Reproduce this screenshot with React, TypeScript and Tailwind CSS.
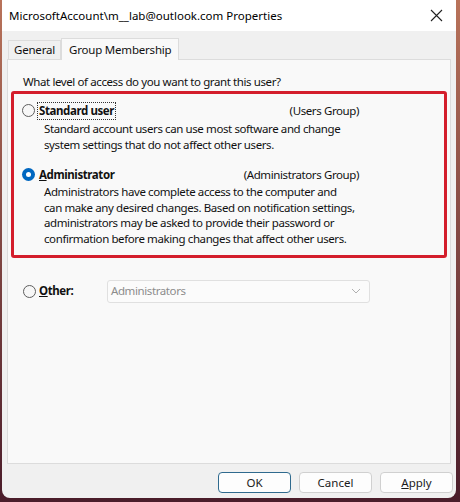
import React from "react";

const font = { fontFamily: '"Noto Sans", "Open Sans", sans-serif' };

const Radio = ({ checked }: { checked?: boolean }) =>
    checked ? (
        <span className="w-[13px] h-[13px] rounded-full bg-[#0067c0] flex items-center justify-center shrink-0">
            <span className="w-[5px] h-[5px] rounded-full bg-white" />
        </span>
    ) : (
        <span className="w-[13px] h-[13px] rounded-full border border-[#5e5e5e] bg-[#f7f7f7] shrink-0" />
    );

const Button = ({ children, primary }: { children: React.ReactNode; primary?: boolean }) => (
    <button
        className={
            primary
                ? "w-[73px] h-[21px] rounded-[4px] border border-[#2f6a8e] bg-[#fdfdfd] text-[11.5px] text-[#1a1a1a]"
                : "w-[73px] h-[21px] rounded-[4px] border border-[#d0d0d0] bg-[#fdfdfd] text-[11.5px] text-[#1a1a1a]"
        }
    >
        {children}
    </button>
);

export default function App() {
    return (
        <div className="w-[460px] h-[502px] bg-linear-to-b from-[#b9735a] to-[#4a1c2a] overflow-hidden" style={font}>
            <div className="ml-[2px] w-[454px] h-[498px] bg-[#f0f0f0] rounded-b-[8px] flex flex-col text-[#111] overflow-hidden">
                {/* title bar */}
                <div className="h-[31px] bg-white flex items-center justify-between pl-[7px] pr-[10px] shrink-0">
                    <span className="text-[11.5px] text-black">MicrosoftAccount\m__lab@outlook.com Properties</span>
                    <svg width="13" height="13" viewBox="0 0 13 13" className="mr-[3px]">
                        <path d="M1 1 L12 12 M12 1 L1 12" stroke="#222" strokeWidth="1.1" />
                    </svg>
                </div>

                {/* tabs */}
                <div className="flex items-end pl-[6px] pt-[6px] h-[28px] shrink-0 text-[11.5px] tracking-[-0.2px]">
                    <div className="h-[19px] px-[5px] border border-b-0 border-[#dcdcdc] bg-[#f0f0f0] flex items-center">General</div>
                    <div className="h-[22px] px-[7px] border border-b-0 border-[#dcdcdc] bg-[#f9f9f9] flex items-center -mb-px relative z-10">Group Membership</div>
                </div>

                {/* panel */}
                <div className="mx-[5px] h-[405px] bg-[#f9f9f9] border border-[#dcdcdc] flex flex-col px-[3px] text-[11.5px] tracking-[-0.4px] shrink-0">
                    <div className="pl-[12px] pt-[14px] h-[31px] leading-[15px]">What level of access do you want to grant this user?</div>

                    <div className="border-[3px] border-[#d41e2c] rounded-[3px] h-[167px] w-[436px] pl-[8px] pt-[7px]">
                        <div className="flex items-center h-[19px] w-[337px]">
                            <Radio />
                            <span className="ml-[2px] font-bold border border-dotted border-[#333] px-px leading-[16px]">Standard user</span>
                            <span className="ml-auto">(Users Group)</span>
                        </div>
                        <div className="pl-[22px] pt-[1px] leading-[15.5px]">
                            Standard account users can use most software and change<br />
                            system settings that do not affect other users.
                        </div>
                        <div className="flex items-center h-[19px] w-[337px] mt-[13px]">
                            <Radio checked />
                            <span className="ml-[4px] font-bold"><span className="underline">A</span>dministrator</span>
                            <span className="ml-auto">(Administrators Group)</span>
                        </div>
                        <div className="pl-[22px] leading-[15.5px]">
                            Administrators have complete access to the computer and<br />
                            can make any desired changes. Based on notification settings,<br />
                            administrators may be asked to provide their password or<br />
                            confirmation before making changes that affect other users.
                        </div>
                    </div>

                    <div className="flex items-center pl-[12px] mt-[21px] h-[24px]">
                        <Radio />
                        <span className="ml-[3px] font-bold w-[68px]"><span className="underline">O</span>ther:</span>
                        <div className="w-[263px] h-[23px] border border-[#e0e0e0] rounded-[3px] bg-[#fbfbfb] flex items-center justify-between pl-[3px] pr-[8px] text-[#8c8c8c]">
                            <span>Administrators</span>
                            <svg width="10" height="6" viewBox="0 0 10 6">
                                <path d="M1 1 L5 5 L9 1" stroke="#b0b0b0" fill="none" strokeWidth="1" />
                            </svg>
                        </div>
                    </div>
                </div>

                {/* footer */}
                <div className="flex justify-end gap-[8px] pr-[3px] pt-[8px]">
                    <Button primary>OK</Button>
                    <Button>Cancel</Button>
                    <Button><span className="underline">A</span>pply</Button>
                </div>
            </div>
        </div>
    );
}
